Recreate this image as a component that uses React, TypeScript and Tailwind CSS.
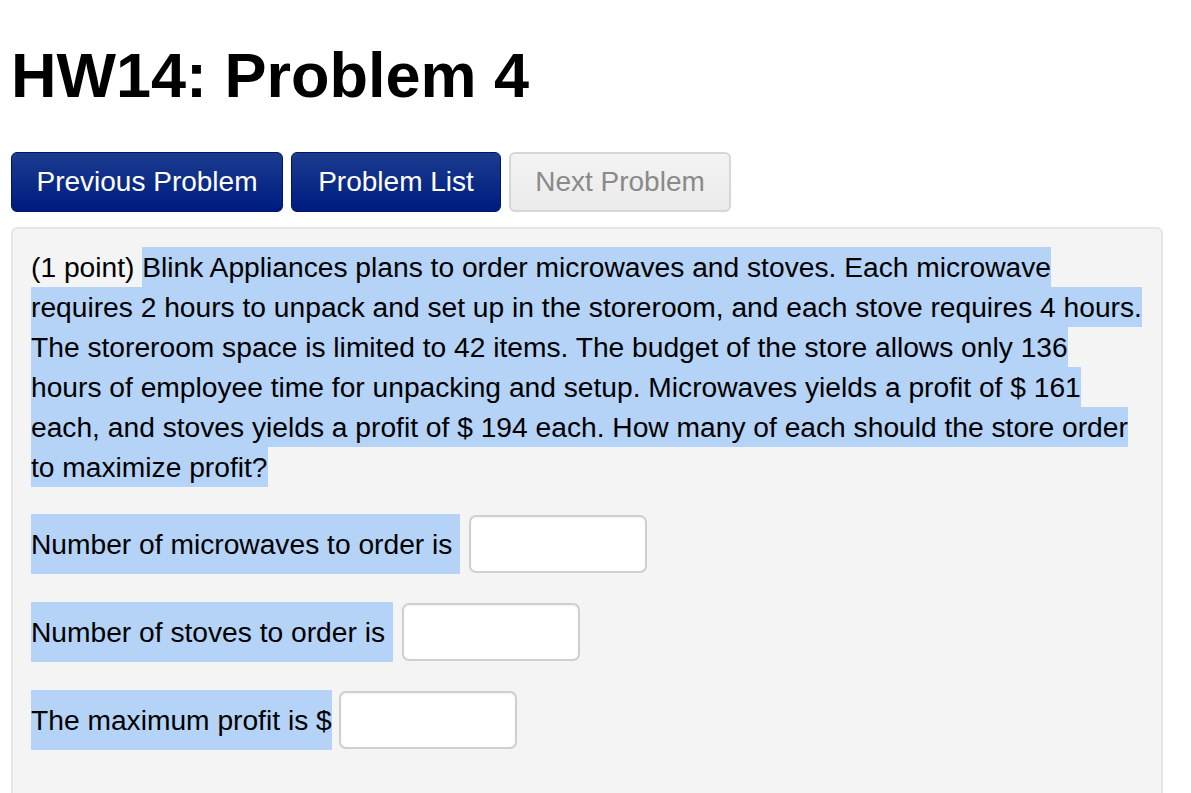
import React from 'react'

const Hl: React.FC<{ children: React.ReactNode }> = ({ children }) => (
  <span className="bg-[#b4d3f7] py-[4px] [box-decoration-break:clone]">{children}</span>
)

const AnswerRow: React.FC<{ label: string; trailing?: boolean }> = ({ label, trailing = true }) => (
  <div className="flex items-center h-[60px]">
    <span
      className={`flex items-center h-[60px] bg-[#b4d3f7] whitespace-nowrap ${trailing ? 'pr-[8px]' : ''}`}
    >
      {label}
    </span>
    <input
      type="text"
      className={`h-[58px] w-[178px] bg-white border-2 border-[#cfcfcf] rounded-[7px] shadow-[inset_0_1px_2px_rgba(0,0,0,0.06)] outline-none ${
        trailing ? 'ml-[9px]' : 'ml-[7px]'
      }`}
    />
  </div>
)

const App: React.FC = () => {
  return (
    <div className="min-h-screen bg-white px-[11px] text-black font-['Liberation_Sans',Arial,sans-serif]">
      {/* Title */}
      <h1 className="pt-[44px] text-[63px] font-bold leading-none">HW14: Problem 4</h1>

      {/* Nav buttons */}
      <div className="mt-[45px] flex gap-[8px]">
        <button className="h-[60px] w-[272px] rounded-[6px] border border-[#001468] bg-gradient-to-b from-[#1c3b8f] to-[#001a80] text-[28px] text-white">
          Previous Problem
        </button>
        <button className="h-[60px] w-[210px] rounded-[6px] border border-[#001468] bg-gradient-to-b from-[#1c3b8f] to-[#001a80] text-[28px] text-white">
          Problem List
        </button>
        <button className="h-[60px] w-[222px] rounded-[6px] border-2 border-[#d6d6d6] bg-gradient-to-b from-[#f3f3f3] to-[#ebebeb] text-[28px] text-[#8a8a8a]">
          Next Problem
        </button>
      </div>

      {/* Problem well */}
      <div className="mt-[15px] w-[1152px] rounded-[6px] border-2 border-[#e6e6e6] bg-[#f4f4f4] pl-[18px] pr-[19px] pt-[18px] pb-[120px]">
        <p className="text-[28.2px] leading-[40px] whitespace-nowrap">
          (1 point) <Hl>Blink Appliances plans to order microwaves and stoves. Each microwave </Hl>
          <br />
          <Hl>requires 2 hours to unpack and set up in the storeroom, and each stove requires 4 hours. </Hl>
          <br />
          <Hl>The storeroom space is limited to 42 items. The budget of the store allows only 136 </Hl>
          <br />
          <Hl>hours of employee time for unpacking and setup. Microwaves yields a profit of $ 161 </Hl>
          <br />
          <Hl>each, and stoves yields a profit of $ 194 each. How many of each should the store order </Hl>
          <br />
          <Hl>to maximize profit? </Hl>
        </p>

        <div className="mt-[27px] flex flex-col gap-[28px] text-[28.2px]">
          <AnswerRow label="Number of microwaves to order is" />
          <AnswerRow label="Number of stoves to order is" />
          <AnswerRow label="The maximum profit is $" trailing={false} />
        </div>
      </div>
    </div>
  )
}

export default App
